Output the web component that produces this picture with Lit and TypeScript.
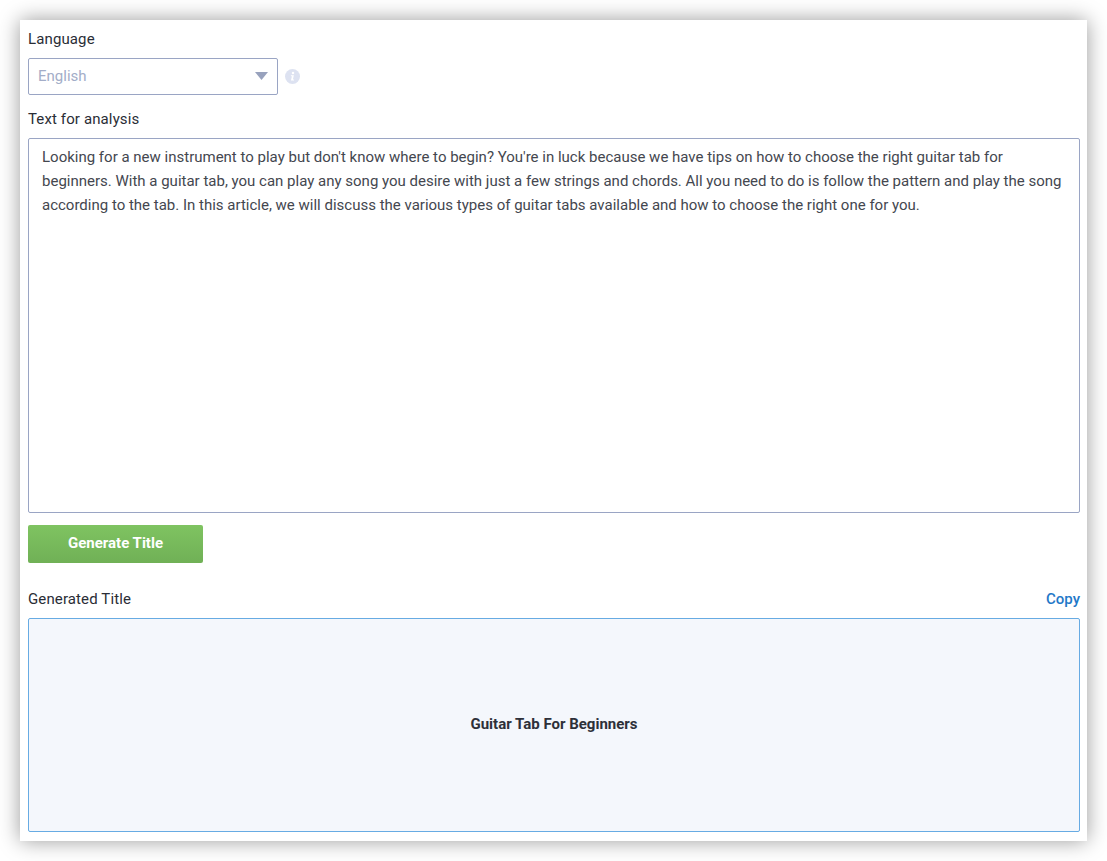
import { LitElement, html, css } from "lit";
import { customElement } from "lit/decorators.js";

@customElement("app-root")
export class AppRoot extends LitElement {
  static styles = css`
    :host {
      display: block;
      box-sizing: border-box;
      width: 1107px;
      height: 861px;
      padding: 20px;
      background: #fff;
      font-family: Roboto, "Liberation Sans", sans-serif;
      color: #2d3039;
      overflow: hidden;
    }
    .card {
      box-sizing: border-box;
      width: 1067px;
      height: 821px;
      padding: 8px 7px 9px 8px;
      background: #fff;
      box-shadow: 0 0 20px rgba(0, 0, 0, 0.4);
      display: flex;
      flex-direction: column;
    }
    .label {
      font-size: 15px;
      font-weight: 400;
      letter-spacing: 0.12px;
      line-height: 22px;
      height: 22px;
      color: #2a2d36;
    }
    .lang-label { margin-bottom: 8px; }
    .select-row {
      display: flex;
      align-items: center;
      gap: 7px;
      margin-bottom: 13px;
    }
    .select {
      box-sizing: border-box;
      width: 250px;
      height: 37px;
      border: 1px solid #9aa5c4;
      border-radius: 2px;
      padding: 0 9px 2px 9px;
      display: flex;
      align-items: center;
      justify-content: space-between;
      font-size: 15px;
      color: #a3adc8;
    }
    .caret { display: block; }
    .info { display: block; }
    .analysis-label { margin-bottom: 8px; }
    .textarea {
      box-sizing: border-box;
      height: 375px;
      border: 1px solid #9aa5c4;
      border-radius: 2px;
      padding: 6px 13px;
      font-size: 15px;
      line-height: 24px;
      color: #44474f;
      margin-bottom: 12px;
    }
    .btn {
      box-sizing: border-box;
      width: 175px;
      height: 38px;
      border: none;
      border-radius: 2px;
      background: linear-gradient(180deg, #7fc361 0%, #70b056 100%);
      color: #fff;
      font-family: inherit;
      font-size: 15px;
      font-weight: 700;
      padding: 0 0 2px;
      margin-bottom: 25px;
    }
    .head {
      display: flex;
      justify-content: space-between;
      align-items: center;
      height: 22px;
      margin-bottom: 8px;
    }
    .copy {
      font-size: 15px;
      font-weight: 500;
      color: #1f78c8;
    }
    .output {
      box-sizing: border-box;
      height: 214px;
      border: 1px solid #67abe3;
      border-radius: 2px;
      background: #f4f7fc;
      padding-bottom: 2px;
      display: flex;
      align-items: center;
      justify-content: center;
      font-size: 15px;
      font-weight: 700;
      color: #2d3039;
    }
  `;

  render() {
    return html`
      <div class="card">
        <div class="label lang-label">Language</div>
        <div class="select-row">
          <div class="select">
            <span>English</span>
            <svg class="caret" width="13" height="8" viewBox="0 0 13 8"><path d="M0 0H13L6.5 8Z" fill="#98a2bd"/></svg>
          </div>
          <svg class="info" width="15" height="15" viewBox="0 0 15 15">
            <circle cx="7.5" cy="7.5" r="7.5" fill="#dde2f1"/>
            <circle cx="8" cy="3.9" r="1.25" fill="#fff"/>
            <path d="M5.9 6.3H8.9L7.9 10.6H9V11.6H5.9L6.9 7.3H5.9Z" fill="#fff"/>
          </svg>
        </div>
        <div class="label analysis-label">Text for analysis</div>
        <div class="textarea">Looking for a new instrument to play but don't know where to begin? You're in luck because we have tips on how to choose the right guitar tab for beginners. With a guitar tab, you can play any song you desire with just a few strings and chords. All you need to do is follow the pattern and play the song according to the tab. In this article, we will discuss the various types of guitar tabs available and how to choose the right one for you.</div>
        <button class="btn">Generate Title</button>
        <div class="head">
          <span class="label">Generated Title</span>
          <span class="copy">Copy</span>
        </div>
        <div class="output">Guitar Tab For Beginners</div>
      </div>
    `;
  }
}
